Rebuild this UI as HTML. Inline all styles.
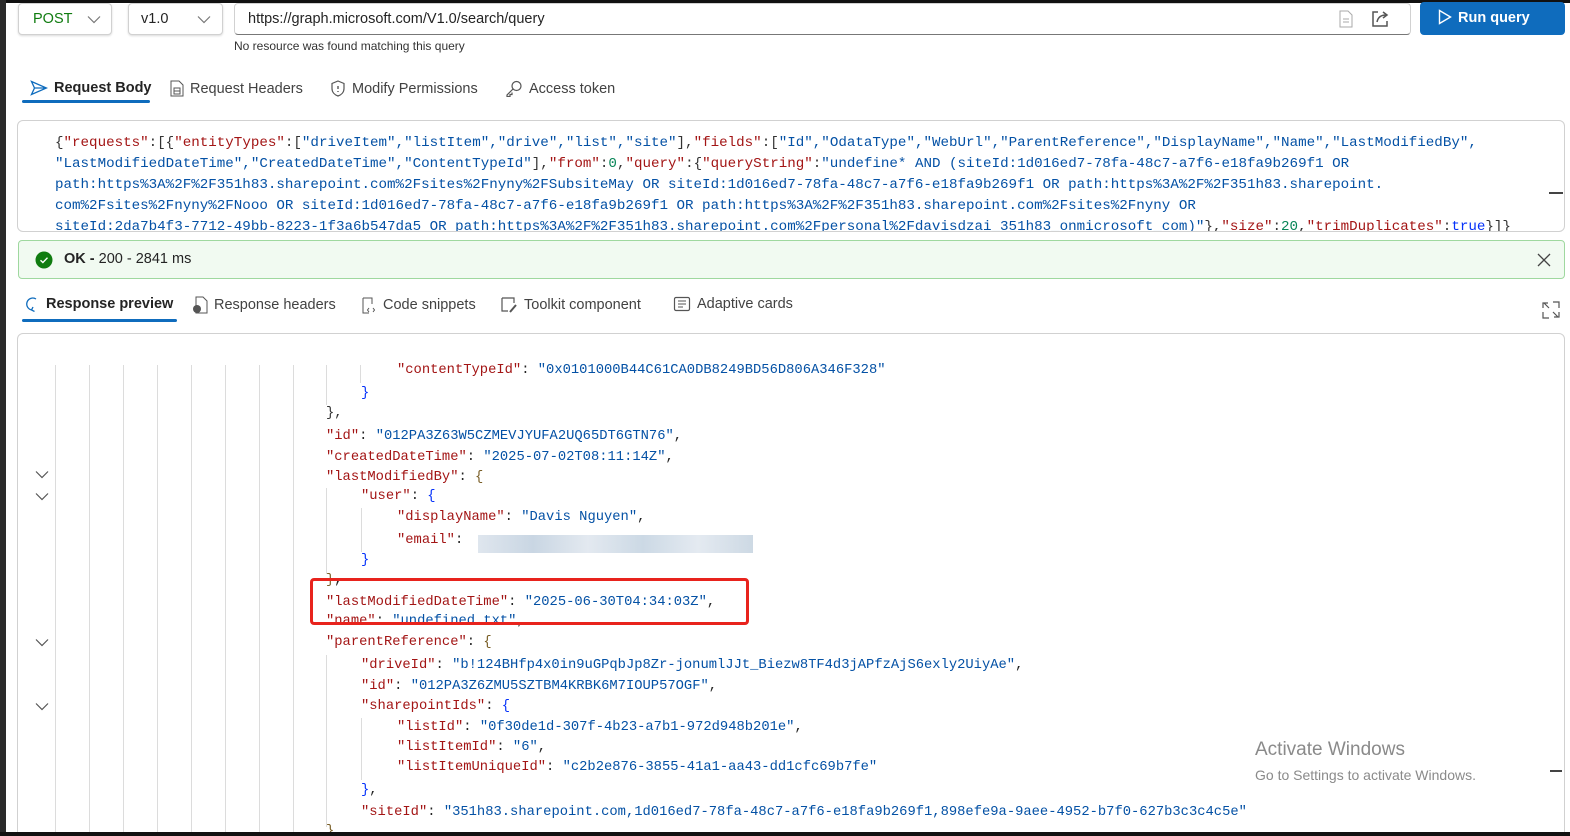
<!DOCTYPE html>
<html><head><meta charset="utf-8"><style>
*{margin:0;padding:0;box-sizing:border-box}
html,body{width:1570px;height:836px;overflow:hidden}
body{background:#fff;font-family:"Liberation Sans",sans-serif;color:#242424;position:relative}
.a{position:absolute;white-space:nowrap}
.box{position:absolute;border:1px solid #d1d1d1;border-radius:4px;background:#fff}
.tab{position:absolute;font-size:14.5px;color:#424242;display:flex;align-items:center;gap:6px}
.m{font-family:"Liberation Mono",monospace}
.rq{font-size:14.2px;line-height:21px;color:#0451a5}
.k{color:#a31515}.s{color:#0451a5}.p{color:#333}.b{color:#0431fa}.n{color:#098658}
.code{font-size:13.8px;line-height:20px}
.g{position:absolute;width:1px;background:#dcdcdc}
.chev{position:absolute}
</style></head><body>
<div class="a" style="left:0;top:0;width:1570px;height:3px;background:#111"></div>
<div class="a" style="left:0;top:0;width:6px;height:836px;background:#2a2a2a"></div>

<div class="box" style="left:18px;top:3px;width:94px;height:32px;box-shadow:0 1px 2px rgba(0,0,0,.15)"><span class="a" style="left:14px;top:7px;font-size:14.5px;color:#107c10">POST</span><svg class="a" style="left:68px;top:11px" width="14" height="9" viewBox="0 0 14 9"><path d="M1 1.5l6 6 6-6" fill="none" stroke="#777" stroke-width="1.2"/></svg></div>
<div class="box" style="left:128px;top:3px;width:95px;height:32px;box-shadow:0 1px 2px rgba(0,0,0,.15)"><span class="a" style="left:12px;top:7px;font-size:14.5px">v1.0</span><svg class="a" style="left:68px;top:11px" width="14" height="9" viewBox="0 0 14 9"><path d="M1 1.5l6 6 6-6" fill="none" stroke="#777" stroke-width="1.2"/></svg></div>
<div class="box" style="left:234px;top:3px;width:1177px;height:32px;border-bottom:1px solid #777"><span class="a" style="left:13px;top:7px;font-size:14.5px">https://graph.microsoft.com/V1.0/search/query</span>
<svg class="a" style="left:1104px;top:6px" width="14" height="18" viewBox="0 0 14 18"><path d="M1 1h8l4 4v12H1z" fill="none" stroke="#aaa"/><path d="M4 9h6M4 12h6" stroke="#aaa"/></svg>
<svg class="a" style="left:1136px;top:6px" width="20" height="18" viewBox="0 0 20 18"><path d="M7 2H2v14h14v-5" fill="none" stroke="#555" stroke-width="1.5"/><path d="M6 12c1-5 4-7 9-7M12 2l4 3-4 3" fill="none" stroke="#555" stroke-width="1.5"/></svg></div>
<div class="a" style="left:1420px;top:2px;width:145px;height:33px;background:#0f6cbd;border-radius:4px;color:#fff;font-weight:bold;font-size:14.5px;padding:7px 0 0 18px"><svg style="vertical-align:-3px;margin-right:6px" width="14" height="16" viewBox="0 0 14 16"><path d="M1.5 1.5l11 6.5-11 6.5z" fill="none" stroke="#fff" stroke-width="1.4"/></svg>Run query</div>
<div class="a" style="left:234px;top:39px;font-size:12px;color:#333">No resource was found matching this query</div>

<div class="tab" style="left:30px;top:80px;color:#242424;font-weight:bold"><svg width="18" height="16" viewBox="0 0 18 16"><path d="M1.5 1.5l15 6.5-15 6.5 3-6.5z M4.5 8h12" fill="none" stroke="#0f6cbd" stroke-width="1.3"/></svg>Request Body</div>
<div class="a" style="left:22px;top:100px;width:128px;height:3px;background:#0f6cbd;border-radius:2px"></div>
<div class="tab" style="left:170px;top:80px"><svg width="14" height="17" viewBox="0 0 14 17"><path d="M1 1h8l4 4v11H1z M4 8h6v6H4z M4 11h6" fill="none" stroke="#555"/></svg>Request Headers</div>
<div class="tab" style="left:330px;top:80px"><svg width="16" height="17" viewBox="0 0 16 17"><path d="M8 1l6 2.5v5c0 4-3 6.5-6 7.5-3-1-6-3.5-6-7.5v-5z" fill="none" stroke="#555" stroke-width="1.2"/><path d="M8 6v3M8 11v1" stroke="#555" stroke-width="1.4"/></svg>Modify Permissions</div>
<div class="tab" style="left:505px;top:80px"><svg width="18" height="17" viewBox="0 0 18 17"><circle cx="11.5" cy="6" r="4.5" fill="none" stroke="#555" stroke-width="1.2"/><path d="M8 9l-6 6v1.5h3v-2h2v-2" fill="none" stroke="#555" stroke-width="1.2"/></svg>Access token</div>

<div class="box" style="left:17px;top:120px;width:1548px;height:112px;border-radius:6px;overflow:hidden">
<div class="a m rq" style="left:37px;top:12px">
<span class="p">{</span><span class="k">"requests"</span><span class="p">:[{</span><span class="k">"entityTypes"</span><span class="p">:[</span>"driveItem","listItem","drive","list","site"<span class="p">],</span><span class="k">"fields"</span><span class="p">:[</span>"Id","OdataType","WebUrl","ParentReference","DisplayName","Name","LastModifiedBy",<br>
"LastModifiedDateTime","CreatedDateTime","ContentTypeId"<span class="p">],</span><span class="k">"from"</span><span class="p">:</span><span class="n">0</span><span class="p">,</span><span class="k">"query"</span><span class="p">:{</span><span class="k">"queryString"</span><span class="p">:</span>"undefine* AND (siteId:1d016ed7-78fa-48c7-a7f6-e18fa9b269f1 OR<br>
path:https%3A%2F%2F351h83.sharepoint.com%2Fsites%2Fnyny%2FSubsiteMay OR siteId:1d016ed7-78fa-48c7-a7f6-e18fa9b269f1 OR path:https%3A%2F%2F351h83.sharepoint.<br>
com%2Fsites%2Fnyny%2FNooo OR siteId:1d016ed7-78fa-48c7-a7f6-e18fa9b269f1 OR path:https%3A%2F%2F351h83.sharepoint.com%2Fsites%2Fnyny OR<br>
siteId:2da7b4f3-7712-49bb-8223-1f3a6b547da5 OR path:https%3A%2F%2F351h83.sharepoint.com%2Fpersonal%2Fdavisdzai_351h83_onmicrosoft_com)"<span class="p">},</span><span class="k">"size"</span><span class="p">:</span><span class="n">20</span><span class="p">,</span><span class="k">"trimDuplicates"</span><span class="p">:</span><span class="b">true</span><span class="p">}]}</span></div>
<div class="a" style="left:1531px;top:71px;width:14px;height:2px;background:#444"></div>
</div>

<div class="a" style="left:18px;top:240px;width:1547px;height:39px;background:#f1faf1;border:1px solid #9fd89f;border-radius:4px">
<svg class="a" style="left:16px;top:10px" width="18" height="18" viewBox="0 0 18 18"><circle cx="9" cy="9" r="8.5" fill="#107c10"/><path d="M5.5 9.2l2.4 2.3 4.6-4.8" fill="none" stroke="#fff" stroke-width="1.4"/></svg>
<span class="a" style="left:45px;top:10px;font-size:14.5px"><b>OK -</b> 200 - 2841 ms</span>
<svg class="a" style="left:1518px;top:12px" width="14" height="14" viewBox="0 0 14 14"><path d="M1 1l12 12M13 1L1 13" stroke="#444" stroke-width="1.3"/></svg></div>

<div class="tab" style="left:24px;top:296px;color:#242424;font-weight:bold"><svg width="16" height="16" viewBox="0 0 16 16"><path d="M12 3A6 6 0 1 0 8 14M9 11l-1.5 3 3 1.5" fill="none" stroke="#0f6cbd" stroke-width="1.3"/></svg>Response preview</div>
<div class="a" style="left:22px;top:319px;width:155px;height:3px;background:#0f6cbd;border-radius:2px"></div>
<div class="tab" style="left:192px;top:296px"><svg width="16" height="18" viewBox="0 0 16 18"><path d="M4 1h7l4 4v12H4z" fill="none" stroke="#555"/><circle cx="5" cy="13" r="4" fill="#555"/></svg>Response headers</div>
<div class="tab" style="left:360px;top:296px"><svg width="17" height="18" viewBox="0 0 17 18"><path d="M3 2h9v6M3 2v15h6" fill="none" stroke="#555"/><path d="M9 12l-1.5 2 1.5 2M13 12l1.5 2-1.5 2" fill="none" stroke="#555"/></svg>Code snippets</div>
<div class="tab" style="left:500px;top:296px"><svg width="18" height="18" viewBox="0 0 18 18"><path d="M2 2h12v5M2 2v13h6" fill="none" stroke="#555" stroke-width="1.2"/><path d="M16 9l-6 7" stroke="#555" stroke-width="2"/></svg>Toolkit component</div>
<div class="tab" style="left:673px;top:296px"><svg width="18" height="16" viewBox="0 0 18 16"><rect x="1.5" y="1.5" width="15" height="13" rx="1.5" fill="none" stroke="#555" stroke-width="1.2"/><path d="M5 5h8M5 8h8M5 11h5" stroke="#555"/></svg>Adaptive cards</div>
<svg class="a" style="left:1542px;top:301px" width="18" height="18" viewBox="0 0 18 18"><path d="M1 7V2h5M2 2l5 5M17 11v5h-5M16 16l-5-5M11 1h6v6M1 11v6h6" fill="none" stroke="#555" stroke-width="1.2"/></svg>

<div class="box" style="left:17px;top:333px;width:1548px;height:520px;border-radius:6px"></div>
<div class="g" style="left:55px;top:365px;height:467px"></div><div class="g" style="left:89px;top:365px;height:467px"></div><div class="g" style="left:123px;top:365px;height:467px"></div><div class="g" style="left:157px;top:365px;height:467px"></div><div class="g" style="left:191px;top:365px;height:467px"></div><div class="g" style="left:225px;top:365px;height:467px"></div><div class="g" style="left:259px;top:365px;height:467px"></div><div class="g" style="left:293px;top:365px;height:467px"></div>
<div class="g" style="left:326px;top:365px;height:40px"></div><div class="g" style="left:360px;top:365px;height:18px"></div>
<div class="g" style="left:326px;top:488px;height:86px"></div><div class="g" style="left:361px;top:508px;height:44px"></div>
<div class="g" style="left:326px;top:655px;height:172px"></div><div class="g" style="left:361px;top:718px;height:62px"></div>

<svg class="chev" style="left:35px;top:470px" width="14" height="9" viewBox="0 0 14 9"><path d="M1 1.5l6 6 6-6" fill="none" stroke="#555" stroke-width="1.2"/></svg>
<svg class="chev" style="left:35px;top:492px" width="14" height="9" viewBox="0 0 14 9"><path d="M1 1.5l6 6 6-6" fill="none" stroke="#555" stroke-width="1.2"/></svg>
<svg class="chev" style="left:35px;top:638px" width="14" height="9" viewBox="0 0 14 9"><path d="M1 1.5l6 6 6-6" fill="none" stroke="#555" stroke-width="1.2"/></svg>
<svg class="chev" style="left:35px;top:702px" width="14" height="9" viewBox="0 0 14 9"><path d="M1 1.5l6 6 6-6" fill="none" stroke="#555" stroke-width="1.2"/></svg>

<div class="a m code" style="left:397px;top:361px"><span class="k">"contentTypeId"</span>: <span class="s">"0x0101000B44C61CA0DB8249BD56D806A346F328"</span></div>
<div class="a m code b" style="left:361px;top:384px">}</div>
<div class="a m code" style="left:326px;top:404px"><span class="p">},</span></div>
<div class="a m code" style="left:326px;top:427px"><span class="k">"id"</span>: <span class="s">"012PA3Z63W5CZMEVJYUFA2UQ65DT6GTN76"</span>,</div>
<div class="a m code" style="left:326px;top:448px"><span class="k">"createdDateTime"</span>: <span class="s">"2025-07-02T08:11:14Z"</span>,</div>
<div class="a m code" style="left:326px;top:468px"><span class="k">"lastModifiedBy"</span>: <span style="color:#795e26">{</span></div>
<div class="a m code" style="left:361px;top:487px"><span class="k">"user"</span>: <span class="b">{</span></div>
<div class="a m code" style="left:397px;top:508px"><span class="k">"displayName"</span>: <span class="s">"Davis Nguyen"</span>,</div>
<div class="a m code" style="left:397px;top:531px"><span class="k">"email"</span>:</div>
<div class="a" style="left:478px;top:535px;width:275px;height:18px;background:linear-gradient(90deg,#dfe6ee,#c9d6e3 20%,#e3e9f0 40%,#ccd9e5 60%,#e4eaf1 80%,#cdd9e4)"></div>
<div class="a m code b" style="left:361px;top:551px">}</div>
<div class="a m code" style="left:326px;top:571px"><span style="color:#795e26">}</span>,</div>
<div class="a m code" style="left:326px;top:593px"><span class="k">"lastModifiedDateTime"</span>: <span class="s">"2025-06-30T04:34:03Z"</span>,</div>
<div class="a m code" style="left:326px;top:612px"><span class="k">"name"</span>: <span class="s">"undefined.txt"</span>,</div>
<div class="a" style="left:310px;top:578px;width:439px;height:47px;border:3px solid #e8231d;border-radius:4px"></div>
<div class="a m code" style="left:326px;top:633px"><span class="k">"parentReference"</span>: <span style="color:#795e26">{</span></div>
<div class="a m code" style="left:361px;top:656px"><span class="k">"driveId"</span>: <span class="s">"b!124BHfp4x0in9uGPqbJp8Zr-jonumlJJt_Biezw8TF4d3jAPfzAjS6exly2UiyAe"</span>,</div>
<div class="a m code" style="left:361px;top:677px"><span class="k">"id"</span>: <span class="s">"012PA3Z6ZMU5SZTBM4KRBK6M7IOUP57OGF"</span>,</div>
<div class="a m code" style="left:361px;top:697px"><span class="k">"sharepointIds"</span>: <span class="b">{</span></div>
<div class="a m code" style="left:397px;top:718px"><span class="k">"listId"</span>: <span class="s">"0f30de1d-307f-4b23-a7b1-972d948b201e"</span>,</div>
<div class="a m code" style="left:397px;top:738px"><span class="k">"listItemId"</span>: <span class="s">"6"</span>,</div>
<div class="a m code" style="left:397px;top:758px"><span class="k">"listItemUniqueId"</span>: <span class="s">"c2b2e876-3855-41a1-aa43-dd1cfc69b7fe"</span></div>
<div class="a m code" style="left:361px;top:781px"><span class="b">}</span>,</div>
<div class="a m code" style="left:361px;top:803px"><span class="k">"siteId"</span>: <span class="s">"351h83.sharepoint.com,1d016ed7-78fa-48c7-a7f6-e18fa9b269f1,898efe9a-9aee-4952-b7f0-627b3c3c4c5e"</span></div>
<div class="a m code" style="left:326px;top:822px;color:#795e26">}</div>

<div class="a" style="left:1255px;top:739px;font-size:19px;color:#8a8a8a">Activate Windows</div>
<div class="a" style="left:1255px;top:767px;font-size:14px;color:#8a8a8a">Go to Settings to activate Windows.</div>
<div class="a" style="left:1550px;top:770px;width:12px;height:2px;background:#444"></div>
<div class="a" style="left:0;top:832px;width:1570px;height:4px;background:#111"></div>
</body></html>
